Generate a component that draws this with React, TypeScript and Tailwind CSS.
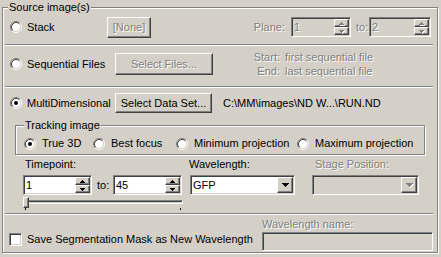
import React from "react";

const raised =
  "border border-t-white border-l-white border-r-[#404040] border-b-[#404040] shadow-[inset_-1px_-1px_0_#808080]";
const sunken =
  "border border-t-[#808080] border-l-[#808080] border-r-white border-b-white shadow-[inset_1px_1px_0_#404040,inset_-1px_-1px_0_#d4d0c8]";
const etched =
  "border border-[#808080] shadow-[1px_1px_0_#fff,inset_1px_1px_0_#fff]";
const grayText = "text-[#808080] [text-shadow:1px_1px_0_#fff]";

const Radio: React.FC<{ checked?: boolean }> = ({ checked }) => (
  <svg width="12" height="12" viewBox="0 0 12 12" className="shrink-0">
    <circle cx="6" cy="6" r="4.5" fill="#fff" />
    <path d="M2.11 9.89A5.5 5.5 0 0 1 9.89 2.11" fill="none" stroke="#808080" />
    <path d="M9.89 2.11A5.5 5.5 0 0 1 2.11 9.89" fill="none" stroke="#fff" />
    <path d="M2.82 9.18A4.5 4.5 0 0 1 9.18 2.82" fill="none" stroke="#404040" />
    <path d="M9.18 2.82A4.5 4.5 0 0 1 2.82 9.18" fill="none" stroke="#d4d0c8" />
    {checked && <circle cx="6" cy="6" r="2" fill="#000" />}
  </svg>
);

const Arrow: React.FC<{ up?: boolean; big?: boolean; color: string }> = ({ up, big, color }) => {
  const rows = big ? [7, 5, 3, 1] : [5, 3, 1];
  const w = rows[0];
  const list = up ? [...rows].reverse() : rows;
  return (
    <svg width={w} height={list.length} shapeRendering="crispEdges" className="block">
      {list.map((n, i) => (
        <rect key={i} x={(w - n) / 2} y={i} width={n} height={1} fill={color} />
      ))}
    </svg>
  );
};

const ArrowGlyph: React.FC<{ up?: boolean; big?: boolean; disabled?: boolean }> = ({
  up,
  big,
  disabled,
}) =>
  disabled ? (
    <span className="relative block">
      <span className="absolute left-[1px] top-[1px]">
        <Arrow up={up} big={big} color="#fff" />
      </span>
      <span className="relative">
        <Arrow up={up} big={big} color="#808080" />
      </span>
    </span>
  ) : (
    <Arrow up={up} big={big} color="#000" />
  );

const SpinBtn: React.FC<{ up?: boolean; disabled?: boolean }> = ({ up, disabled }) => (
  <div className={`${raised} flex h-[8px] w-[15px] items-center justify-center bg-[#d4d0c8]`}>
    <ArrowGlyph up={up} disabled={disabled} />
  </div>
);

const SpinBox: React.FC<{ value: string; width: string; disabled?: boolean }> = ({
  value,
  width,
  disabled,
}) => (
  <div
    className={`${sunken} flex h-[20px] shrink-0 p-[1px] ${width} ${
      disabled ? "bg-[#d4d0c8]" : "bg-white"
    }`}
  >
    <span className={`flex-1 pl-[1px] leading-[16px] ${disabled ? grayText : ""}`}>{value}</span>
    <div className="flex w-[15px] flex-col">
      <SpinBtn up disabled={disabled} />
      <SpinBtn disabled={disabled} />
    </div>
  </div>
);

const Combo: React.FC<{ value?: string; width: string; disabled?: boolean }> = ({
  value,
  width,
  disabled,
}) => (
  <div
    className={`${sunken} flex h-[20px] shrink-0 p-[1px] ${width} ${
      disabled ? "bg-[#d4d0c8]" : "bg-white"
    }`}
  >
    <span className="flex-1 pl-[1px] leading-[16px]">{value}</span>
    <div className={`${raised} flex h-[16px] w-[16px] items-center justify-center bg-[#d4d0c8]`}>
      <ArrowGlyph big disabled={disabled} />
    </div>
  </div>
);

const Button: React.FC<{ label: string; width: string; height: string; disabled?: boolean }> = ({
  label,
  width,
  height,
  disabled,
}) => (
  <div
    className={`${raised} flex shrink-0 items-center justify-center bg-[#d4d0c8] ${width} ${height}`}
  >
    <span className={disabled ? grayText : ""}>{label}</span>
  </div>
);

const Separator: React.FC = () => (
  <div className="ml-[2px] mr-[4px] h-[2px] border-t border-b border-t-[#808080] border-b-white" />
);

const trackingOptions = [
  { label: "True 3D", width: "w-[69px]", checked: true },
  { label: "Best focus", width: "w-[83px]" },
  { label: "Minimum projection", width: "w-[121px]" },
  { label: "Maximum projection", width: "w-[100px]" },
];

export default function App() {
  return (
    <div className="h-[257px] w-[441px] overflow-hidden bg-[#d4d0c8] pl-[2px] font-['Liberation_Sans',Arial,sans-serif] text-[11px] leading-[13px] text-black">
      <fieldset className={`${etched} m-0 h-[253px] w-[436px] p-0`}>
        <legend className="ml-[5px] bg-[#d4d0c8] px-[1px] leading-[15px]">Source image(s)</legend>

        {/* Stack */}
        <div className="flex h-[24px] items-center">
          <div className="flex w-[104px] items-center gap-[5px] pl-[7px]">
            <Radio />
            <span>Stack</span>
          </div>
          <Button label="[None]" width="w-[44px]" height="h-[21px]" disabled />
          <span className={`ml-auto mr-[6px] ${grayText}`}>Plane:</span>
          <SpinBox value="1" width="w-[60px]" disabled />
          <span className={`ml-[5px] w-[13px] ${grayText}`}>to:</span>
          <SpinBox value="2" width="w-[62px]" disabled />
          <div className="w-[6px] shrink-0" />
        </div>
        <div className="mt-[5px]">
          <Separator />
        </div>

        {/* Sequential files */}
        <div className="flex h-[36px] items-center">
          <div className="flex w-[112px] items-center gap-[5px] pl-[7px]">
            <Radio />
            <span>Sequential Files</span>
          </div>
          <Button label="Select Files..." width="w-[98px]" height="h-[22px]" disabled />
          <div className={`ml-[40px] grid grid-cols-[27px_auto] gap-x-[5px] leading-[14px] ${grayText}`}>
            <span className="text-right">Start:</span>
            <span>first sequential file</span>
            <span className="text-right">End:</span>
            <span>last sequential file</span>
          </div>
        </div>
        <div className="mt-[4px]">
          <Separator />
        </div>

        {/* MultiDimensional */}
        <div className="flex h-[30px] items-center">
          <div className="flex w-[112px] items-center gap-[5px] pl-[7px]">
            <Radio checked />
            <span>MultiDimensional</span>
          </div>
          <Button label="Select Data Set..." width="w-[97px]" height="h-[20px]" />
          <span className="ml-[11px]">C:\MM\images\ND W...\RUN.ND</span>
        </div>

        <fieldset className={`${etched} mx-[12px] p-0`}>
          <legend className="ml-[8px] bg-[#d4d0c8] px-[1px] leading-[15px]">Tracking image</legend>
          <div className="flex h-[21px] items-center pl-[8px]">
            {trackingOptions.map((o) => (
              <div key={o.label} className={`flex shrink-0 items-center gap-[6px] ${o.width}`}>
                <Radio checked={o.checked} />
                <span className="whitespace-nowrap">{o.label}</span>
              </div>
            ))}
          </div>
        </fieldset>

        <div className="mt-[3px] flex h-[13px] pl-[20px]">
          <span className="w-[166px] pl-[2px]">Timepoint:</span>
          <span className="w-[123px]">Wavelength:</span>
          <span className={`w-[107px] pl-[3px] ${grayText}`}>Stage Position:</span>
        </div>

        <div className="mt-[4px] flex h-[20px] items-center pl-[20px]">
          <SpinBox value="1" width="w-[69px]" />
          <span className="ml-[5px] w-[16px]">to:</span>
          <SpinBox value="45" width="w-[69px]" />
          <div className="ml-[8px]">
            <Combo value="GFP" width="w-[105px]" />
          </div>
          <div className="ml-[17px]">
            <Combo width="w-[107px]" disabled />
          </div>
        </div>

        <div className="relative ml-[20px] h-[16px] w-[160px]">
          <div className={`${sunken} absolute left-0 right-0 top-[5px] h-[4px] bg-[#d4d0c8]`} />
          <div className={`${raised} absolute left-0 top-[2px] h-[11px] w-[6px] bg-[#d4d0c8]`} />
          <div className="absolute left-[2px] top-[13px] h-[2px] w-[1px] bg-black" />
          <div className="absolute left-[157px] top-[13px] h-[2px] w-[1px] bg-black" />
        </div>

        <div className="mt-[2px]">
          <Separator />
        </div>

        <div className="flex h-[37px]">
          <div className="mt-[18px] flex h-[13px] items-center pl-[6px]">
            <div className={`${sunken} h-[13px] w-[13px] shrink-0 bg-white`} />
            <span className="ml-[5px] whitespace-nowrap">Save Segmentation Mask as New Wavelength</span>
          </div>
          <div className="ml-auto mr-[4px] flex flex-col">
            <span className={`mt-[3px] ${grayText}`}>Wavelength name:</span>
            <div className={`${sunken} mt-[1px] h-[19px] w-[171px] bg-[#d4d0c8]`} />
          </div>
        </div>
      </fieldset>
    </div>
  );
}
